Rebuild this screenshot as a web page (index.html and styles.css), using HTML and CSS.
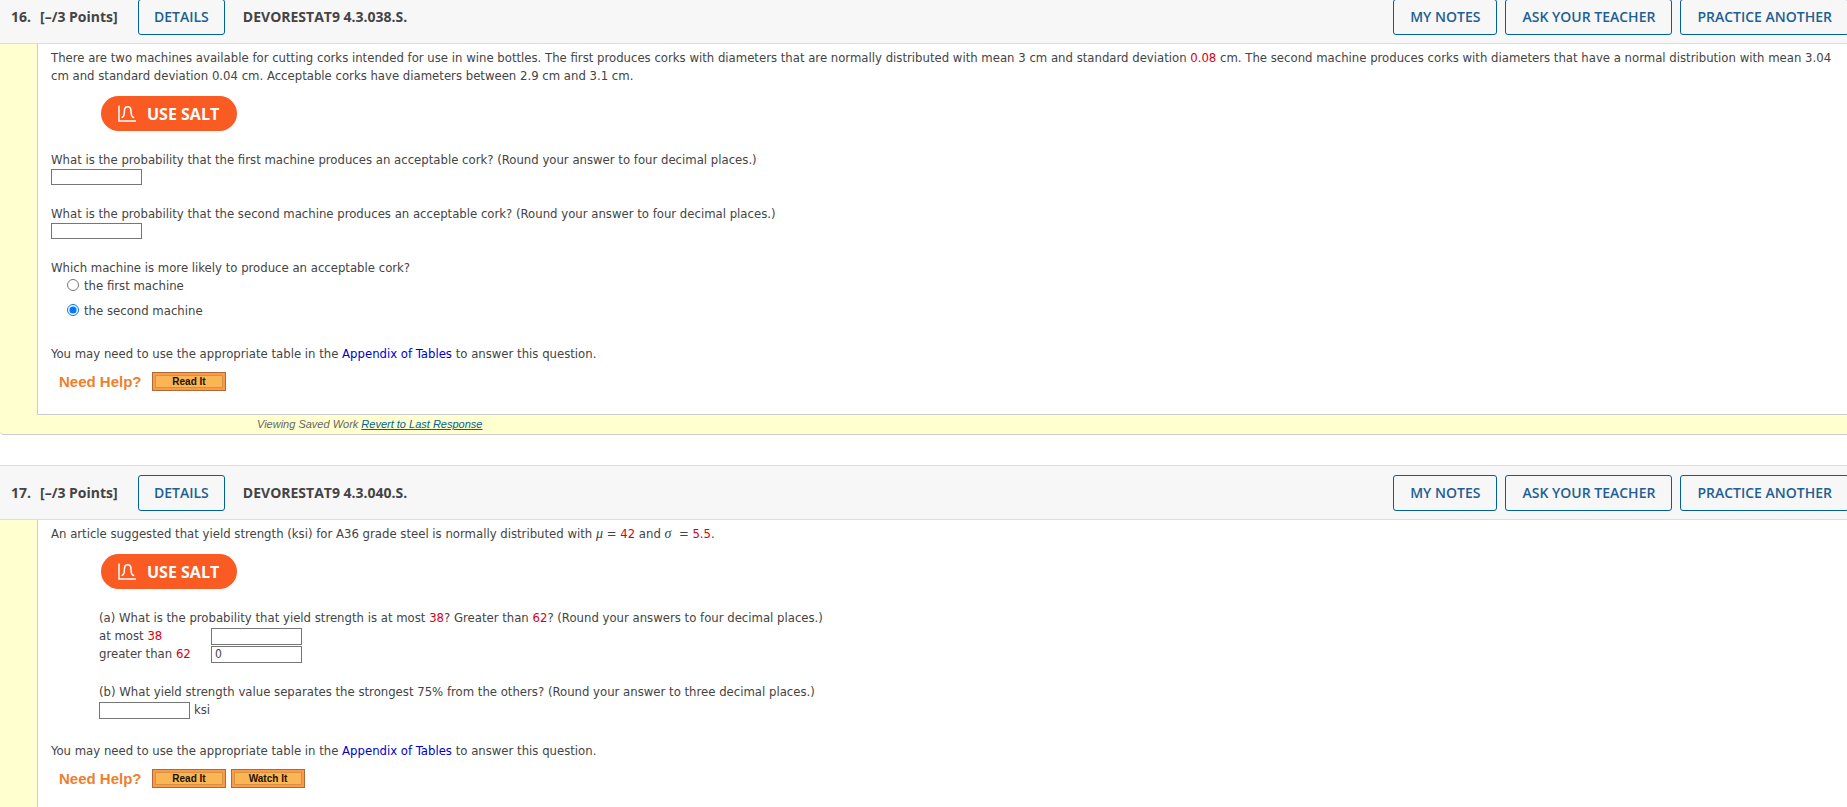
FILE: index.html
```html
<!DOCTYPE html>
<html lang="en">
<head>
    <meta charset="UTF-8">
    <meta name="viewport" content="width=device-width, initial-scale=1.0">
    <title>Normal Distribution Homework</title>
    <link rel="stylesheet" href="styles.css">
</head>
<body>
    <main class="assignment">
        <section class="question">
            <header class="question-header">
                <span class="number">16.</span>
                <span class="points">[–/3 Points]</span>
                <button class="button">DETAILS</button>
                <h2 class="name">DEVORESTAT9 4.3.038.S.</h2>
                <div class="actions">
                    <button class="button">MY NOTES</button>
                    <button class="button">ASK YOUR TEACHER</button>
                    <button class="button">PRACTICE ANOTHER</button>
                </div>
            </header>
            <div class="question-body">
                <div class="content">
                    <p>There are two machines available for cutting corks intended for use in wine bottles. The first produces corks with diameters that are normally distributed with mean 3 cm and standard deviation <span class="red">0.08</span> cm. The second machine produces corks with diameters that have a normal distribution with mean 3.04 cm and standard deviation 0.04 cm. Acceptable corks have diameters between 2.9 cm and 3.1 cm.</p>
                    <button class="salt">
                        <svg class="salt-icon" viewBox="0 0 18 17" width="18" height="17" aria-hidden="true">
                            <path d="M1 0.5V16H18M3.5 12.5C7 12.5 6 8 6.6 4.5C7 0.8 12.4 0.8 12.8 4.5C13.4 8 12.4 12.5 16.2 12.5"/>
                        </svg>
                        USE SALT
                    </button>
                    <div class="part">
                        <label for="first-prob">What is the probability that the first machine produces an acceptable cork? (Round your answer to four decimal places.)</label>
                        <input class="answer" type="text" id="first-prob">
                    </div>
                    <div class="part">
                        <label for="second-prob">What is the probability that the second machine produces an acceptable cork? (Round your answer to four decimal places.)</label>
                        <input class="answer" type="text" id="second-prob">
                    </div>
                    <div class="part">
                        <p>Which machine is more likely to produce an acceptable cork?</p>
                        <div class="choices">
                            <label class="choice"><input type="radio" name="machine">the first machine</label>
                            <label class="choice"><input type="radio" name="machine" checked>the second machine</label>
                        </div>
                    </div>
                    <p>You may need to use the appropriate table in the <a class="appendix" href="#">Appendix of Tables</a> to answer this question.</p>
                    <div class="help">
                        <span class="help-title">Need Help?</span>
                        <button class="help-button">Read It</button>
                    </div>
                </div>
                <div class="saved">Viewing Saved Work <a href="#">Revert to Last Response</a></div>
            </div>
        </section>

        <section class="question">
            <header class="question-header">
                <span class="number">17.</span>
                <span class="points">[–/3 Points]</span>
                <button class="button">DETAILS</button>
                <h2 class="name">DEVORESTAT9 4.3.040.S.</h2>
                <div class="actions">
                    <button class="button">MY NOTES</button>
                    <button class="button">ASK YOUR TEACHER</button>
                    <button class="button">PRACTICE ANOTHER</button>
                </div>
            </header>
            <div class="question-body">
                <div class="content">
                    <p>An article suggested that yield strength (ksi) for A36 grade steel is normally distributed with <i class="symbol">μ</i> = <span class="red">42</span> and <i class="symbol">σ</i>&nbsp; = <span class="red">5.5</span>.</p>
                    <button class="salt">
                        <svg class="salt-icon" viewBox="0 0 18 17" width="18" height="17" aria-hidden="true">
                            <path d="M1 0.5V16H18M3.5 12.5C7 12.5 6 8 6.6 4.5C7 0.8 12.4 0.8 12.8 4.5C13.4 8 12.4 12.5 16.2 12.5"/>
                        </svg>
                        USE SALT
                    </button>
                    <div class="part indent">
                        <p>(a) What is the probability that yield strength is at most <span class="red">38</span>? Greater than <span class="red">62</span>? (Round your answers to four decimal places.)</p>
                        <div class="rows">
                            <label for="at-most">at most <span class="red">38</span></label>
                            <input class="answer" type="text" id="at-most">
                            <label for="greater-than">greater than <span class="red">62</span></label>
                            <input class="answer" type="text" id="greater-than" value="0">
                        </div>
                    </div>
                    <div class="part indent">
                        <label for="strength">(b) What yield strength value separates the strongest 75% from the others? (Round your answer to three decimal places.)</label>
                        <div class="unit"><input class="answer" type="text" id="strength">ksi</div>
                    </div>
                    <p>You may need to use the appropriate table in the <a class="appendix" href="#">Appendix of Tables</a> to answer this question.</p>
                    <div class="help">
                        <span class="help-title">Need Help?</span>
                        <button class="help-button">Read It</button>
                        <button class="help-button">Watch It</button>
                    </div>
                </div>
            </div>
        </section>
    </main>
</body>
</html>
```

FILE: styles.css
```css
body {
    margin: 0;
    background-color: white;
    color: #444;
    font-family: "DejaVu Sans Condensed", "DejaVu Sans", sans-serif;
    font-size: 13px;
    line-height: 18px;
}
p {
    margin: 0;
}
.assignment {
    height: 100vh;
    overflow: hidden;
}
.question {
    margin-bottom: 30px;
}
.question:first-child {
    margin-top: -11px; /* header starts above the fold */
}
.question-header {
    display: flex;
    align-items: center;
    height: 53px;
    padding-left: 11px;
    background-color: #f7f7f7;
    border-top: 1px solid #ddd;
    border-bottom: 1px solid #ddd;
    font-family: "Open Sans", sans-serif;
    font-size: 14px;
    font-weight: 700;
}
.number {
    width: 29px;
}
.points {
    width: 98px;
    white-space: nowrap;
}
.button {
    height: 36px;
    padding: 0 15px;
    background-color: #f7f7f7;
    border: 1px solid #006298;
    border-radius: 3px;
    color: #1f5f93;
    font-family: "Open Sans", sans-serif;
    font-size: 14px;
    font-weight: 600;
    white-space: nowrap;
    cursor: pointer;
}
.name {
    margin: 0 0 0 18px;
    font-size: 14px;
}
.actions {
    display: flex;
    gap: 8px;
    margin-left: auto;
    margin-right: -2px;
}
.actions .button {
    padding: 0 16px;
}
.question-body {
    background-color: #ffffcf;
    border-bottom: 1px solid #ccc;
    border-radius: 0 0 0 4px;
}
.content {
    margin-left: 37px;
    padding: 5px 0 23px 13px;
    background-color: white;
    border-left: 1px solid #ccc;
    border-bottom: 1px solid #ccc;
}
.red {
    color: #d7000f;
}
.symbol {
    font-family: "Liberation Serif", serif;
    font-size: 14px;
    line-height: 1;
}
.salt {
    display: flex;
    align-items: center;
    gap: 11px;
    height: 35px;
    margin: 11px 0 20px 50px;
    padding: 0 18px 0 17px;
    background-color: #f95b23;
    border: none;
    border-radius: 18px;
    color: white;
    font-family: "Open Sans", sans-serif;
    font-size: 16px;
    font-weight: 700;
    cursor: pointer;
}
.salt-icon {
    fill: none;
    stroke: white;
    stroke-width: 1.5;
}
.part {
    margin-bottom: 20px;
}
.part > label {
    display: block;
}
.indent {
    margin-left: 48px;
}
.answer {
    display: block;
    box-sizing: border-box;
    width: 91px;
    height: 16px;
    padding: 0 3px;
    border: 1px solid #767676;
    color: #444;
    font-family: "DejaVu Sans Condensed", "DejaVu Sans", sans-serif;
    font-size: 12px;
}
.choices {
    padding-left: 16px;
    margin-bottom: 25px;
}
.choice {
    display: flex;
    align-items: center;
    gap: 5px;
    height: 18px;
    margin-bottom: 7px;
}
.choice input {
    width: 12px;
    height: 12px;
    margin: 0 0 2px;
}
.rows {
    display: grid;
    grid-template-columns: 112px 91px;
    align-items: center;
}
.rows .answer,
.unit .answer {
    height: 17px;
}
.unit {
    display: flex;
    align-items: center;
    gap: 4px;
    margin-bottom: 23px;
}
.appendix {
    color: #0000cc;
    text-decoration: none;
}
.help {
    display: flex;
    align-items: center;
    gap: 5px;
    margin-top: 9px;
    padding-left: 8px;
}
.help-title {
    width: 88px;
    color: #ee7f2d;
    font-family: "Liberation Sans", Arial, sans-serif;
    font-size: 15px;
    font-weight: 700;
}
.help-button {
    width: 74px;
    height: 19px;
    padding: 0;
    background-color: #fab655;
    border: 1px solid #b06a35;
    box-shadow: inset 0 0 0 2px #fb9a4b, inset 0 0 0 3px #d9903f;
    color: #221100;
    font-family: "Liberation Sans", Arial, sans-serif;
    font-size: 10px;
    font-weight: 700;
    cursor: pointer;
}
.saved {
    padding-left: 257px;
    height: 19px;
    color: #666;
    font-family: "Liberation Sans", Arial, sans-serif;
    font-size: 11px;
    font-style: italic;
}
.saved a {
    color: #006298;
}
```
